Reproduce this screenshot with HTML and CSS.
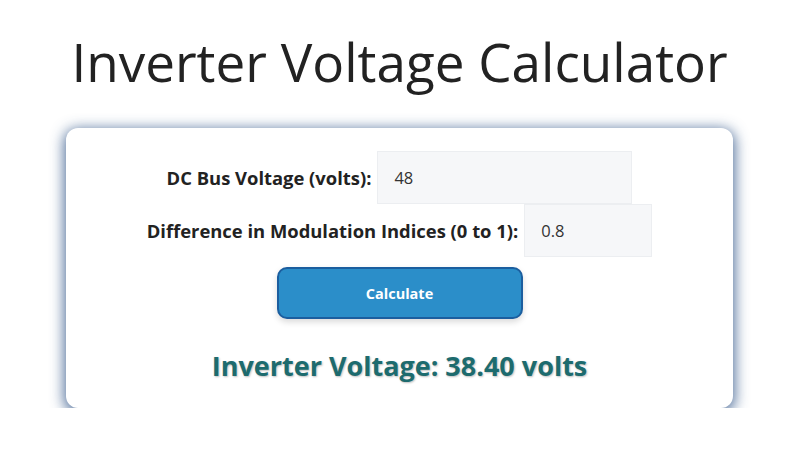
FILE: index.html
```html
<!DOCTYPE html>
<html>
<head>
<meta charset="utf-8">
<link rel="stylesheet" href="styles.css">
</head>
<body>
<h1 class="title">Inverter Voltage Calculator</h1>
<div class="card">
  <div class="row">
    <label class="label" for="dc">DC Bus Voltage (volts):</label>
    <input class="field field-wide" id="dc" type="text" value="48">
  </div>
  <div class="row">
    <label class="label" for="mi">Difference in Modulation Indices (0 to 1):</label>
    <input class="field field-narrow" id="mi" type="text" value="0.8">
  </div>
  <div class="actions">
    <button class="btn">Calculate</button>
  </div>
  <div class="result">Inverter Voltage: 38.40 volts</div>
</div>
</body>
</html>
```
FILE: styles.css
```css
html, body {
  margin: 0;
  padding: 0;
  background: #fff;
}
body {
  font-family: "Open Sans", "Noto Sans", sans-serif;
  color: #222;
}
.title {
  margin: 24px 0 0;
  font-size: 53px;
  font-weight: 400;
  line-height: 76px;
  text-align: center;
  color: #222;
}
.card {
  box-sizing: border-box;
  width: 667px;
  height: 280px;
  margin: 28px auto 0;
  padding-top: 23px;
  background: #fff;
  border-radius: 12px;
  box-shadow: 0 3px 14px 2px rgba(55, 90, 140, 0.85);
}
.row {
  display: flex;
  justify-content: center;
  align-items: center;
  gap: 6px;
}
.label {
  font-size: 18.4px;
  font-weight: 700;
  color: #222;
}
.field {
  box-sizing: border-box;
  height: 53px;
  padding: 0 16px;
  border: 1px solid #eceef1;
  background: #f6f7f9;
  font-family: "Open Sans", sans-serif;
  font-size: 16.5px;
  color: #333;
  outline: none;
}
.field-wide { width: 255px; }
.field-narrow { width: 128px; }
.actions {
  display: flex;
  justify-content: center;
  margin-top: 10px;
}
.btn {
  box-sizing: border-box;
  width: 246px;
  height: 52px;
  background: #2b8ec9;
  border: 2px solid #1b5e9f;
  border-radius: 10px;
  color: #fff;
  font-family: "Open Sans", sans-serif;
  font-size: 14.5px;
  font-weight: 700;
  box-shadow: 0 3px 6px rgba(0, 0, 0, 0.15);
}
.result {
  margin-top: 28px;
  text-align: center;
  font-size: 27px;
  font-weight: 700;
  color: #1d6b6e;
  text-shadow: 1px 1px 2px rgba(0, 0, 0, 0.25);
}
```
